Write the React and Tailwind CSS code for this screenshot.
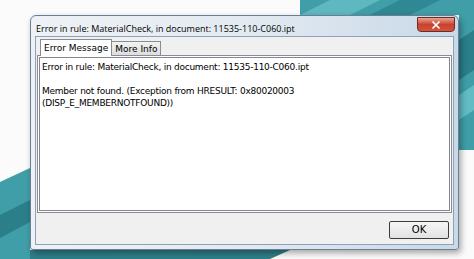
import { X } from "lucide-react";

const ui = { fontFamily: '"Open Sans", "Noto Sans", sans-serif' };
const comic = { fontFamily: '"DejaVu Sans", "Noto Sans", sans-serif' };

function Backdrop() {
  return (
    <svg className="absolute inset-0" width="474" height="259" viewBox="0 0 474 259">
      <rect width="474" height="259" fill="#fbfbfb" />
      <polygon points="300,0 474,0 474,150 459,150 459,15 300,15" fill="#3f9ea8" />
      <polygon points="330,0 380,0 350,15 300,15" fill="#5fb7bf" />
      <polygon points="400,0 440,0 410,15 370,15" fill="#2f8893" />
      <polygon points="459,40 474,30 474,70 459,80" fill="#2a7f8a" />
      <polygon points="459,95 474,85 474,110 459,120" fill="#62bcc3" />
      <polygon points="0,182 30,168 30,259 0,259" fill="#3f9ea8" />
      <polygon points="0,215 30,200 30,222 0,238" fill="#2b7f89" />
      <polygon points="30,250 290,250 270,259 30,259" fill="#2e7f88" />
    </svg>
  );
}

export default function App() {
  return (
    <div className="relative w-[474px] h-[259px] overflow-hidden">
      <Backdrop />
      <div className="relative pl-[30px] pt-[15px]">
        <div className="w-[429px] h-[235px] rounded-t-[6px] rounded-b-[3px] border border-[#6b7f94] bg-gradient-to-r from-[#eef2f6] via-[#e3eaf1] to-[#c9d9e8] shadow-[2px_3px_6px_rgba(0,0,0,0.35)] flex flex-col">
          <div className="h-[20px] flex items-start justify-between">
            <span className="text-[9px] leading-none text-black mt-[8px] ml-[5px]" style={ui}>
              Error in rule: MaterialCheck, in document: 11535-110-C060.ipt
            </span>
            <button className="mt-[1px] mr-[3px] w-[38px] h-[15px] rounded-b-[4px] border border-[#6e2b24] bg-gradient-to-b from-[#e8a293] via-[#c8412e] to-[#d3543e] flex items-center justify-center">
              <X className="w-3 h-3 text-white" strokeWidth={3.5} />
            </button>
          </div>
          <div className="flex-1 mx-[4px] mb-[4px] border border-[#8da2b8] bg-[#f0f0f0] flex flex-col">
            <div className="flex items-end pl-[4px] pt-[3px] h-[19px]" style={comic}>
              <div className="relative z-10 h-[17px] px-[3px] bg-white border border-b-0 border-[#898c95] text-[9px] leading-[16px] text-black">
                Error Message
              </div>
              <div className="h-[15px] px-[3px] bg-gradient-to-b from-[#f2f2f2] to-[#dcdcdc] border border-l-0 border-b-0 border-[#898c95] text-[9px] leading-[14px] text-black">
                More Info
              </div>
            </div>
            <div className="-mt-[1px] mx-[1px] h-[158px] border border-[#898c95] bg-white p-[1px]">
              <div className="h-full border border-[#828790] px-[2px] pt-[3px] text-[9px] leading-[12px] tracking-[-0.25px] text-black" style={comic}>
                <p>Error in rule: MaterialCheck, in document: 11535-110-C060.ipt</p>
                <p className="mt-[12px]">Member not found. (Exception from HRESULT: 0x80020003</p>
                <p>(DISP_E_MEMBERNOTFOUND))</p>
              </div>
            </div>
            <div className="flex justify-end pr-[4px] pt-[8px]">
              <button className="w-[60px] h-[18px] rounded-[2px] border border-[#3c3c3c] bg-gradient-to-b from-[#f6f6f6] to-[#e2e2e2] text-[10px] leading-none text-black" style={comic}>
                OK
              </button>
            </div>
          </div>
        </div>
      </div>
    </div>
  );
}
